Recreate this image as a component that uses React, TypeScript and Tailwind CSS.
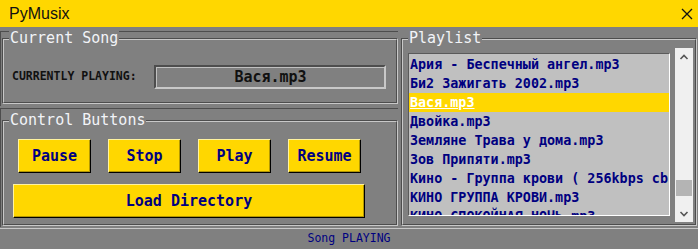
import type { ReactNode } from 'react';

const songs = [
  'Ария - Беспечный ангел.mp3',
  'Би2 Зажигать 2002.mp3',
  'Вася.mp3',
  'Двойка.mp3',
  'Земляне Трава у дома.mp3',
  'Зов Припяти.mp3',
  'Кино - Группа крови ( 256kbps cbr ).mp3',
  'КИНО ГРУППА КРОВИ.mp3',
  'КИНО СПОКОЙНАЯ НОЧЬ.mp3',
];

const SELECTED = 2;

function Groove({ title, className, children }: { title: string; className: string; children: ReactNode }) {
  return (
    <div
      className={`relative border border-t-[#4d4d4d] border-l-[#4d4d4d] border-b-[#c8c8c8] border-r-[#c8c8c8] ${className}`}
    >
      <div className="h-full border border-t-[#c8c8c8] border-l-[#c8c8c8] border-b-[#4d4d4d] border-r-[#4d4d4d]">
        {children}
      </div>
      <span className="absolute -top-[10px] left-[6px] bg-[#808080] px-px font-['DejaVu_Sans_Mono',monospace] text-[15px] leading-[18px] text-[#f2f4f8]">
        {title}
      </span>
    </div>
  );
}

function TkButton({ label, className }: { label: string; className: string }) {
  return (
    <button
      type="button"
      className={`flex items-center justify-center border border-t-[#fff3a0] border-l-[#fff3a0] border-b-black border-r-black bg-[#ffd700] font-['DejaVu_Sans_Mono',monospace] text-[15px] font-bold text-[#000080] shadow-[inset_-1px_-1px_0_#b39700] ${className}`}
    >
      {label}
    </button>
  );
}

export default function App() {
  return (
    <div className="flex h-[249px] w-[698px] flex-col overflow-hidden bg-[#808080]">
      {/* title bar */}
      <div className="flex h-[27px] shrink-0 items-center justify-between bg-[#ffd700] pl-[9px] pr-[5px]">
        <span className="font-['Liberation_Sans',sans-serif] text-[16px] text-[#111]">PyMusix</span>
        <svg width="12" height="12" viewBox="0 0 12 12">
          <path d="M1 1 L11 11 M11 1 L1 11" stroke="#111" strokeWidth="1.3" />
        </svg>
      </div>

      <div className="flex h-[201px] shrink-0">
        {/* left column */}
        <div className="flex w-[398px] flex-col">
          <div className="h-[80px] pt-[4px]">
            <div className="h-[75px] border-t border-l border-t-[#4d4d4d] border-l-[#4d4d4d] pl-[1px] pt-[6px]">
              <Groove title="Current Song" className="h-[66px]">
                <div className="flex items-center pt-[25px]">
                  <span className="w-[150px] pl-[8px] font-['DejaVu_Sans_Mono',monospace] text-[11.5px] font-bold text-[#111]">
                    CURRENTLY PLAYING:
                  </span>
                  <div className="h-[24px] w-[232px] border-2 border-t-[#4d4d4d] border-l-[#4d4d4d] border-b-[#c8c8c8] border-r-[#c8c8c8]">
                    <div className="flex h-full items-center justify-center border-t border-l border-t-[#c0c0c0] border-l-[#c0c0c0] font-['DejaVu_Sans_Mono',monospace] text-[15px] font-bold text-[#111]">
                      Вася.mp3
                    </div>
                  </div>
                </div>
              </Groove>
            </div>
          </div>

          <div className="h-[121px] pt-[1px]">
            <div className="h-[119px] border-t border-l border-t-[#4d4d4d] border-l-[#4d4d4d] pl-[1px] pt-[11px]">
              <Groove title="Control Buttons" className="h-[106px]">
                <div className="flex flex-col pt-[17px]">
                  <div className="flex gap-[17px] pl-[14px]">
                    <TkButton label="Pause" className="h-[34px] w-[73px]" />
                    <TkButton label="Stop" className="h-[34px] w-[73px]" />
                    <TkButton label="Play" className="h-[34px] w-[73px]" />
                    <TkButton label="Resume" className="h-[34px] w-[73px]" />
                  </div>
                  <div className="pl-[9px] pt-[11px]">
                    <TkButton label="Load Directory" className="h-[34px] w-[352px]" />
                  </div>
                </div>
              </Groove>
            </div>
          </div>
        </div>

        {/* playlist */}
        <div className="flex-1 pl-[3px] pt-[11px]">
          <Groove title="Playlist" className="h-[188px] w-[296px]">
            <div className="flex items-start pl-[5px]">
              <div className="mt-[13px] h-[163px] w-[262px] overflow-hidden border border-t-[#5a5a5a] border-l-[#5a5a5a] border-b-white border-r-white bg-[#c0c0c0] pt-px">
                {songs.map((s, i) => (
                  <div
                    key={s}
                    className={`h-[19px] whitespace-nowrap pl-px font-['DejaVu_Sans_Mono',monospace] text-[13.4px] font-bold leading-[19px] ${
                      i === SELECTED ? 'bg-[#ffd700] text-white underline' : 'text-[#000080]'
                    }`}
                  >
                    {s}
                  </div>
                ))}
              </div>
              <div className="ml-[5px] mt-[8px] flex h-[174px] w-[18px] flex-col items-center bg-[#f0f0f0]">
                <svg width="10" height="8" viewBox="0 0 10 8" className="mt-[5px]">
                  <path d="M1.5 6 L5 2.5 L8.5 6" stroke="#555" strokeWidth="1.6" fill="none" />
                </svg>
                <div className="mt-[119px] h-[16px] w-[16px] bg-[#b4b4b4]" />
                <svg width="10" height="8" viewBox="0 0 10 8" className="mt-[14px]">
                  <path d="M1.5 2 L5 5.5 L8.5 2" stroke="#555" strokeWidth="1.6" fill="none" />
                </svg>
              </div>
            </div>
          </Groove>
        </div>
      </div>

      {/* status bar */}
      <div className="flex h-[21px] items-center justify-center border-t border-t-[#c8c8c8] pb-[1px] font-['DejaVu_Sans_Mono',monospace] text-[11.5px] text-[#000080]">
        Song PLAYING
      </div>
    </div>
  );
}
